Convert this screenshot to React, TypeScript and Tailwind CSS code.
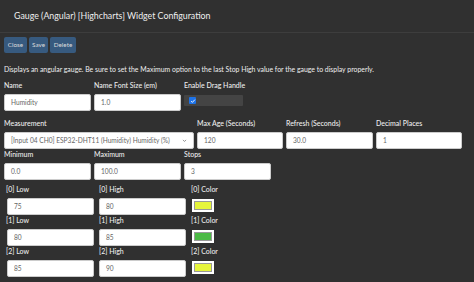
import React from "react";

const inputCls =
  "h-[17px] bg-white rounded-[2px] px-[6px] text-[6.6px] text-[#666] flex items-center border border-[#ccc] whitespace-nowrap overflow-hidden";

const labelCls = "text-[7px] leading-[10px] text-[#eee] font-medium whitespace-nowrap";

function Field({ label, value, w, className = "" }: { label: string; value: string; w: string; className?: string }) {
  return (
    <div className={`flex flex-col ${className}`}>
      <span className={`${labelCls} mb-[4px]`}>{label}</span>
      <div className={`${inputCls} ${w}`}>{value}</div>
    </div>
  );
}

function ColorField({ label, color }: { label: string; color: string }) {
  return (
    <div className="flex flex-col">
      <span className={`${labelCls} mb-[5px]`}>{label}</span>
      <div className="w-[22px] h-[13px] bg-white p-[2px] ml-[1px]">
        <div className="w-full h-full border border-[#999]" style={{ backgroundColor: color }} />
      </div>
    </div>
  );
}

const stops = [
  { low: "75", high: "80", color: "#e6f53c" },
  { low: "80", high: "85", color: "#4cba46" },
  { low: "85", high: "90", color: "#e6f53c" },
];

export default function App() {
  return (
    <div className="w-[474px] h-[282px] bg-[#303030] text-white overflow-hidden" style={{ fontFamily: "Lato, 'Noto Sans', sans-serif" }}>
      <header className="h-[33px] border-b border-[#3d3d3d] flex items-center px-[14px]">
        <h1 className="text-[8.8px] text-[#eee]">Gauge (Angular) [Highcharts] Widget Configuration</h1>
      </header>

      <div className="flex gap-[2px] ml-[4px] mt-[4px]">
        <button className="h-[16px] w-[23px] bg-[#375a7f] rounded-[2px] text-[6.3px] text-[#ddd]">Close</button>
        <button className="h-[16px] w-[19px] bg-[#375a7f] rounded-[2px] text-[6.3px] text-[#ddd]">Save</button>
        <button className="h-[16px] w-[26px] bg-[#375a7f] rounded-[2px] text-[6.3px] text-[#ddd]">Delete</button>
      </div>

      <p className="mx-[4px] mt-[11px] text-[6.9px] leading-[10px] text-[#eee]">
        Displays an angular gauge. Be sure to set the Maximum option to the last Stop High value for the gauge to display properly.
      </p>

      <div className="flex gap-[3px] ml-[4px] mt-[6px]">
        <Field label="Name" value="Humidity" w="w-[87px]" />
        <Field label="Name Font Size (em)" value="1.0" w="w-[87px]" />
        <div className="flex flex-col">
          <span className={`${labelCls} mb-[5px]`}>Enable Drag Handle</span>
          <div className="w-[59px] h-[11px] bg-[#444] rounded-[1px] flex items-center pl-[5px]">
            <div className="w-[7px] h-[7px] bg-[#1e73e8] rounded-[1px] flex items-center justify-center">
              <svg viewBox="0 0 8 8" className="w-[6px] h-[6px]">
                <path d="M1.5 4.2 L3.2 5.8 L6.5 2.2" fill="none" stroke="white" strokeWidth="1.2" />
              </svg>
            </div>
          </div>
        </div>
      </div>

      <div className="flex gap-[3px] ml-[4px] mt-[7px]">
        <div className="flex flex-col">
          <span className={`${labelCls} mb-[4px]`}>Measurement</span>
          <div className={`${inputCls} w-[190px] justify-between`}>
            <span>[Input 04 CH0] ESP32-DHT11 (Humidity) Humidity (%)</span>
            <svg viewBox="0 0 8 8" className="w-[5px] h-[5px] shrink-0">
              <path d="M1.5 3 L4 5.5 L6.5 3" fill="none" stroke="#555" strokeWidth="1" />
            </svg>
          </div>
        </div>
        <Field label="Max Age (Seconds)" value="120" w="w-[86px]" />
        <Field label="Refresh (Seconds)" value="30.0" w="w-[87px]" />
        <Field label="Decimal Places" value="1" w="w-[86px]" />
      </div>

      <div className="flex gap-[3px] ml-[4px]">
        <Field label="Minimum" value="0.0" w="w-[87px]" />
        <Field label="Maximum" value="100.0" w="w-[87px]" />
        <Field label="Stops" value="3" w="w-[87px]" />
      </div>

      <div className="flex flex-col ml-[6px] mt-[4px]">
        {stops.map((s, i) => (
          <div key={i} className="flex">
            <Field label={`[${i}] Low`} value={s.low} w="w-[87px] ml-[1px]" className="w-[93px]" />
            <Field label={`[${i}] High`} value={s.high} w="w-[87px]" className="w-[92px]" />
            <ColorField label={`[${i}] Color`} color={s.color} />
          </div>
        ))}
      </div>
    </div>
  );
}
